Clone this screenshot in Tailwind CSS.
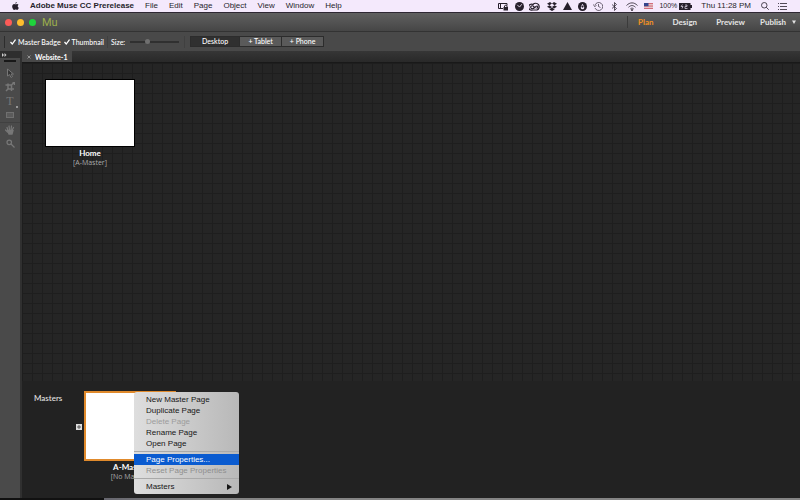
<!DOCTYPE html>
<html lang="en">
<head>
  <meta charset="UTF-8">
  <meta name="viewport" content="width=device-width, initial-scale=1.0">
  <title>Adobe Muse CC Prerelease</title>
  <script src="https://cdn.jsdelivr.net/npm/@tailwindcss/browser@4"></script>
</head>
<body class="h-screen flex flex-col overflow-hidden bg-[#232323] font-['Lato','Liberation_Sans',sans-serif] text-[7px] leading-[10px] text-[#e4e4e4]">

  <!-- System menu bar -->
  <header class="h-[13px] shrink-0 flex items-center justify-between px-3 bg-[#f4e9fc] border-b border-[#2e2733] font-['Liberation_Sans',sans-serif] text-[8px] text-[#261f2b]">
    <nav class="flex items-center gap-[11px]">
      <button aria-label="Apple menu" class="w-[7px]">
        <svg viewBox="0 0 16 18" class="w-[7px] h-2" fill="currentColor"><path d="M11 0c0 2-1.500 4-3.500 4C7.300 2 9 .3 11 0zM8 5c1 0 2-.8 3.600-.8 1.400 0 2.600.7 3.400 1.800-2.800 1.700-2.400 5.600.6 6.800C14.800 15 13.300 18 11.500 18c-1.200 0-1.600-.8-3.200-.8S6.300 18 5.100 18C3 18 .4 13.800.4 10c0-3.700 2.200-5.800 4.400-5.800C6.200 4.200 7.200 5 8 5z"/></svg>
      </button>
      <button class="font-bold">Adobe Muse CC Prerelease</button>
      <button>File</button>
      <button>Edit</button>
      <button>Page</button>
      <button>Object</button>
      <button>View</button>
      <button>Window</button>
      <button>Help</button>
    </nav>
    <div class="flex items-center gap-[6px]">
      <svg viewBox="0 0 24 18" class="w-3 h-[9px]" fill="none" stroke="currentColor" stroke-width="2"><path d="M12 13H3V3h17v4M7 3v10"/><path d="M13 10h9v7h-9z" fill="currentColor" stroke="none"/><path d="M15 11V8c0-2 5-2 5 0v3"/></svg>
      <svg viewBox="0 0 16 16" class="w-[9px] h-[9px] mr-[-1px]"><circle cx="8" cy="8" r="8" fill="currentColor"/><path d="M4 5l4 4 4-5" fill="none" stroke="#f4e9fc" stroke-width="1.500"/></svg>
      <svg viewBox="0 0 24 18" class="w-3 h-[9px]" fill="none" stroke="currentColor" stroke-width="2.400"><path d="M7 16a6 6 0 1 1 1-11 7 7 0 1 1 8 11H7z"/><path d="M13 12l-4-3a3 3 0 1 0-1 4c2 0 5-5 8-5a2 2 0 1 1-1 4"/></svg>
      <svg viewBox="0 0 20 18" class="w-[10px] h-[9px]" fill="currentColor"><path d="M6 0l4 3-5 3.500L0 3.500zM14 0l6 3.500-5 3L10 3zM5 6.500l5 3.500-4 3-6-3.500zM15 6.500l5 3-6 3.500-4-3zM10 11l4 3 1-.6V15l-5 3-5-3v-1.600l1 .6z"/></svg>
      <svg viewBox="0 0 18 16" class="w-[9px] h-2" fill="currentColor"><path d="M9 0l9 16H0z"/></svg>
      <svg viewBox="0 0 16 16" class="w-[9px] h-[9px]"><circle cx="8" cy="8" r="8" fill="currentColor"/><path d="M8 3c2 3 3 5 3 7a3 3 0 0 1-6 0c0-2 1-4 3-7z" fill="#f4e9fc"/><circle cx="8" cy="8" r="2" fill="currentColor"/></svg>
      <svg viewBox="0 0 20 18" class="w-[10px] h-[9px]" fill="none" stroke="currentColor" stroke-width="1.300"><path d="M4 6a8 8 0 1 1 0 6M1 5l2 4 4-2M11 4v5l4 2"/></svg>
      <svg viewBox="0 0 12 18" class="w-[7px] h-[9px] mx-[2px]" fill="none" stroke="currentColor" stroke-width="1.500"><path d="M1 5l9 8-4 4V1l4 4-9 8"/></svg>
      <svg viewBox="0 0 24 18" class="w-3 h-[9px]" fill="none" stroke="currentColor" stroke-width="1.600"><path d="M1 7c7-7 15-7 22 0M5 10.500c5-4.500 9-4.500 14 0M8.500 14c3-2.500 4-2.500 7 0"/><circle cx="12" cy="16" r="1.200" fill="currentColor"/></svg>
      <svg viewBox="0 0 18 12" class="w-[9px] h-[6px]"><path fill="#eee" d="M0 0h18v12H0z"/><path stroke="#c94a5c" stroke-width="1.600" d="M0 1h18M0 4.300h18M0 7.600h18M0 11h18"/><path fill="#34458c" d="M0 0h9v6.500H0z"/></svg>
      <span class="flex items-center gap-[2px] text-[7px]">100%
        <svg viewBox="0 0 26 14" class="w-[13px] h-[7px]"><path d="M0 0h23v4h3v6h-3v4H0z" fill="currentColor"/><path d="M7 3L4 7h4l-2 4M12 4h4v3h-4v4h5" fill="none" stroke="#f4e9fc" stroke-width="1.300"/></svg>
      </span>
      <span class="ml-[3px]">Thu 11:28 PM</span>
      <button aria-label="Search" class="ml-1"><svg viewBox="0 0 16 16" class="w-2 h-2" fill="none" stroke="currentColor" stroke-width="1.600"><circle cx="6.500" cy="6.500" r="5.500"/><path d="M10.500 10.500l5 5"/></svg></button>
      <button aria-label="Notifications" class="ml-[3px]"><svg viewBox="0 0 20 14" class="w-[10px] h-[7px]" fill="none" stroke="currentColor" stroke-width="1.600"><path d="M0 1h2M4 1h14M0 7h2M4 7h14M0 13h2M4 13h14"/></svg></button>
    </div>
  </header>

  <!-- Title bar -->
  <div class="h-[19px] shrink-0 flex items-center justify-between pl-[5px] pr-1 bg-linear-to-b from-[#606060] to-[#464646] border-b border-[#333]">
    <div class="flex items-center gap-1">
      <button aria-label="Close" class="size-[7px] rounded-full bg-[#fc5b57]"></button>
      <button aria-label="Minimize" class="size-[7px] rounded-full bg-[#fdbd2e] ml-px"></button>
      <button aria-label="Zoom" class="size-[7px] rounded-full bg-[#1fd33c] ml-px"></button>
      <span class="pl-[2px] text-[11px] leading-[14px] pt-px text-[#9bae4b] font-['Roboto',sans-serif]">Mu</span>
    </div>
    <nav class="flex items-center text-[8px] font-bold">
      <span class="h-3 border-l border-[#3b3b3b] mr-[10px]"></span>
      <button class="text-[#f29221] mr-[19px]">Plan</button>
      <button class="mr-[19px]">Design</button>
      <button class="mr-[15px]">Preview</button>
      <button class="flex items-center gap-[6px]">Publish
        <svg viewBox="0 0 8 8" class="w-1 h-1" fill="currentColor"><path d="M0 1h8L4 8z"/></svg>
      </button>
    </nav>
  </div>

  <!-- Control strip -->
  <div class="h-[19px] shrink-0 flex items-center pl-1 bg-[#494949] font-medium text-white">
    <span class="h-3 border-l border-[#2d2d2d] mr-[5px]"></span>
    <label class="flex items-center gap-[2px] mr-[3px]">
      <input type="checkbox" checked class="sr-only">
      <svg viewBox="0 0 12 12" class="w-[6px] h-[6px]" fill="none" stroke="currentColor" stroke-width="2.500"><path d="M1 6l3.500 4L11 1"/></svg>
      Master Badge
    </label>
    <label class="flex items-center gap-[2px]">
      <input type="checkbox" checked class="sr-only">
      <svg viewBox="0 0 12 12" class="w-[6px] h-[6px]" fill="none" stroke="currentColor" stroke-width="2.500"><path d="M1 6l3.500 4L11 1"/></svg>
      Thumbnail
    </label>
    <span class="h-3 border-l border-[#404040] mx-[3px]"></span>
    <label for="size" class="mr-[5px]">Size:</label>
    <input id="size" type="range" value="33" class="w-[49px] h-[6px] appearance-none bg-transparent [&::-webkit-slider-runnable-track]:h-[2px] [&::-webkit-slider-runnable-track]:bg-[#303030] [&::-webkit-slider-thumb]:appearance-none [&::-webkit-slider-thumb]:size-[5px] [&::-webkit-slider-thumb]:mt-[-2px] [&::-webkit-slider-thumb]:rounded-full [&::-webkit-slider-thumb]:bg-[#707070]">
    <span class="h-3 border-l border-[#404040] mx-[5px]"></span>
    <div class="flex h-[11px] border border-[#2c2c2c] leading-[9px]">
      <button class="w-12 bg-[#303030]">Desktop</button>
      <button class="w-[42px] bg-[#5a5a5a] border-l border-[#2c2c2c]">+ Tablet</button>
      <button class="w-[42px] bg-[#5a5a5a] border-l border-[#2c2c2c]">+ Phone</button>
    </div>
  </div>

  <div class="flex grow min-h-0">
    <!-- Tools -->
    <aside class="w-[22px] shrink-0 flex flex-col items-center bg-[#4a4a4a] border-r-2 border-[#303030] text-[#777]">
      <div class="w-full h-[7px] pl-[2px] flex items-center bg-[#2e2e2e]">
        <svg viewBox="0 0 10 8" class="w-[5px] h-1" fill="#ccc"><path d="M0 0l4 4-4 4zM5 0l4 4-4 4z"/></svg>
      </div>
      <div class="w-3 h-[2px] mt-[2px] mb-1 bg-[#181818]"></div>
      <button aria-label="Selection" class="h-[14px]"><svg viewBox="0 0 16 20" class="w-2 h-[10px]" fill="#353535" stroke="currentColor" stroke-width="2"><path d="M3 2v14l4-3 3 6 3-2-3-5h5z"/></svg></button>
      <button aria-label="Crop" class="h-[14px]"><svg viewBox="0 0 20 20" class="size-[10px]" fill="none" stroke="currentColor" stroke-width="3"><path d="M1 6h12v12M6 3v11h12M13 6l5-5M2 18l6-6M15 1h4v5"/></svg></button>
      <button aria-label="Text" class="h-[14px] w-full flex items-center justify-center relative text-[12px] leading-[12px] font-['Liberation_Serif',serif]">T<span class="absolute right-[2px] bottom-0 size-[2px] bg-[#999]"></span></button>
      <button aria-label="Rectangle" class="h-[14px]"><span class="block w-2 h-[6px] bg-[#5b5b5b] border border-[#707070]"></span></button>
      <button aria-label="Hand" class="h-[14px] w-full flex items-center justify-center border-t border-[#404040]"><svg viewBox="0 0 20 20" class="size-[10px]" fill="none" stroke="currentColor" stroke-width="2.500" stroke-linecap="round"><path d="M6 11L4 5M9 10L8 2M12 10l1-8M14 11l3-6M5 14l-4-4"/><path d="M5 11h11l-2 7H8z" fill="currentColor"/></svg></button>
      <button aria-label="Zoom" class="h-[14px]"><svg viewBox="0 0 18 18" class="size-[9px]" fill="none" stroke="currentColor" stroke-width="2.500"><circle cx="6.500" cy="6.500" r="4.500"/><path d="M10 10l7 7"/></svg></button>
    </aside>

    <div class="grow min-w-0 flex flex-col">
      <!-- Document tabs -->
      <div class="h-3 shrink-0 flex bg-linear-to-b from-[#363636] to-[#292929] border-b border-[#191919]">
        <div class="flex items-center gap-1 h-[11px] px-[5px] bg-[#484848] font-bold text-white">
          <button aria-label="Close tab" class="flex"><svg viewBox="0 0 8 8" class="w-1 h-1" stroke="#aaa" stroke-width="1.500"><path d="M1 1l6 6M7 1L1 7"/></svg></button>
          Website-1
        </div>
      </div>

      <!-- Site map -->
      <main class="grow min-h-0 pl-[23px] pt-4 bg-[#252525] bg-[linear-gradient(to_right,#1e1e1e_1px,transparent_1px),linear-gradient(to_bottom,#1e1e1e_1px,transparent_1px)] bg-[size:10px_10px]">
        <figure class="w-[90px] flex flex-col items-center">
          <div class="w-full h-[68px] bg-white border border-black"></div>
          <figcaption class="pt-[2px] text-center leading-[9px]"><b class="text-[8px] text-white">Home</b><br><span class="text-[#aaa] font-['Open_Sans',sans-serif]">[A-Master]</span></figcaption>
        </figure>
      </main>

      <!-- Masters -->
      <section class="h-[117px] shrink-0 relative flex bg-[#222] pl-3 pt-[10px]">
        <h2 class="w-[42px] pt-[2px] text-[8px] font-medium">Masters</h2>
        <button aria-label="Add master" class="size-[6px] mt-[33px] mr-[2px] bg-[#ddd] text-[#222] flex items-center justify-center"><svg viewBox="0 0 6 6" class="w-1 h-1" stroke="currentColor"><path d="M3 0v6M0 3h6"/></svg></button>
        <figure class="w-[92px]">
          <div class="h-[70px] bg-white border-2 border-[#e08a2c]"></div>
          <figcaption class="pt-[2px] text-center leading-[9px]"><b class="text-[8px] text-white">A-Master</b><br><span class="text-[#aaa] font-['Open_Sans',sans-serif]">[No Master]</span></figcaption>
        </figure>

        <!-- Context menu -->
        <div role="menu" class="absolute left-[112px] top-[11px] w-[105px] py-[2px] flex flex-col rounded-[3px] bg-linear-to-r from-[#dedede] to-[#b8b8b8] font-['Liberation_Sans',sans-serif] text-[8px] leading-[11px] text-[#161616]">
          <button role="menuitem" class="text-left px-3">New Master Page</button>
          <button role="menuitem" class="text-left px-3">Duplicate Page</button>
          <button role="menuitem" disabled class="text-left px-3 text-[#9c9c9c]">Delete Page</button>
          <button role="menuitem" class="text-left px-3">Rename Page</button>
          <button role="menuitem" class="text-left px-3">Open Page</button>
          <hr class="my-[2px] border-[#a9a9a9]">
          <button role="menuitem" class="text-left px-3 bg-[#0a5bd0] text-white">Page Properties...</button>
          <button role="menuitem" disabled class="text-left px-3 text-[#8f8f8f]">Reset Page Properties</button>
          <hr class="my-[2px] border-[#a9a9a9]">
          <button role="menuitem" class="flex items-center justify-between pl-3 pr-[7px]">Masters
            <svg viewBox="0 0 10 12" class="w-[5px] h-[6px]" fill="currentColor"><path d="M0 0l10 6-10 6z"/></svg>
          </button>
        </div>
      </section>
    </div>
  </div>

  <footer class="h-[2px] shrink-0 bg-linear-to-r from-[#111] from-13% via-[#66666e] via-13% to-[#858585] to-25%"></footer>
</body>
</html>
